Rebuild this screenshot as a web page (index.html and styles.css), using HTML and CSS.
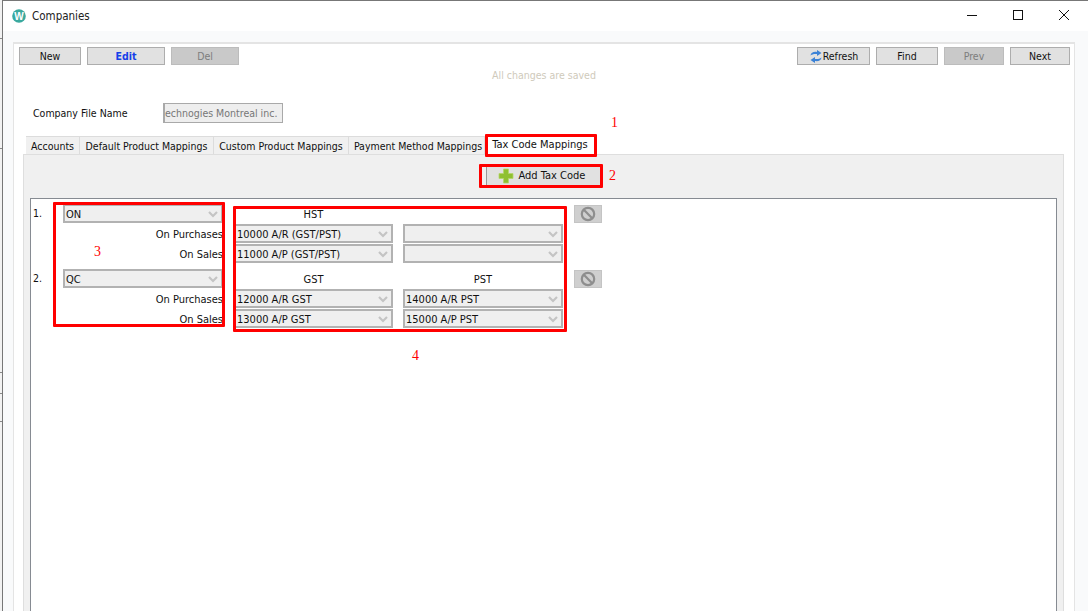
FILE: index.html
```html
<!DOCTYPE html>
<html lang="en">
<head>
<meta charset="utf-8">
<title>Companies</title>
<link rel="stylesheet" href="styles.css">
</head>
<body>
<div class="desktop">
  <i class="tick t1"></i><i class="tick t2"></i><i class="tick t3"></i><i class="tick t4"></i><i class="tick t5"></i>
  <div class="window">
    <header class="titlebar">
      <svg class="app-icon" viewBox="0 0 14 14" width="14" height="14"><circle cx="7" cy="7" r="6.800" fill="#3aa99f"/><text x="7" y="10.500" text-anchor="middle" class="app-w">W</text></svg>
      <span class="title">Companies</span>
      <div class="controls">
        <svg width="46" height="12" viewBox="0 0 46 12"><path d="M18 6.500h10" stroke="#111" fill="none"/></svg>
        <svg width="46" height="12" viewBox="0 0 46 12"><rect x="18.500" y="1.500" width="9" height="9" stroke="#111" fill="none"/></svg>
        <svg width="46" height="12" viewBox="0 0 46 12"><path d="M18 1l10 10M28 1L18 11" stroke="#111" fill="none"/></svg>
      </div>
    </header>
    <main class="client">
      <section class="panel">
        <div class="toolbar">
          <div class="btn-group">
            <button class="btn w62">New</button>
            <button class="btn w78 edit">Edit</button>
            <button class="btn w68 off">Del</button>
          </div>
          <div class="btn-group">
            <button class="btn w73"><svg class="refresh" viewBox="0 0 14 14" width="14" height="15"><path d="M1.500 6C2 3 4.500 1.800 8 2.400V.6l4.500 3L8 6.400V4.600C5.500 4.200 3.500 4.600 1.500 6z" fill="#3b82d6"/><path d="M12.500 8C12 11 9.500 12.200 6 11.600v1.800l-4.500-3L6 7.600v1.800c2.500.4 4.500 0 6.500-1.400z" fill="#3b82d6"/></svg>Refresh</button>
            <button class="btn w62">Find</button>
            <button class="btn w60 off">Prev</button>
            <button class="btn w60">Next</button>
          </div>
        </div>
        <p class="status">All changes are saved</p>
        <div class="file-row">
          <label class="file-label">Company File Name</label>
          <div class="file-input">echnogies Montreal inc.</div>
        </div>
        <nav class="tabs">
          <span class="tab w54">Accounts</span>
          <span class="tab w134">Default Product Mappings</span>
          <span class="tab w135">Custom Product Mappings</span>
          <span class="tab w136">Payment Method Mappings</span>
          <span class="tab active">Tax Code Mappings</span>
        </nav>
        <div class="pane">
          <div class="add-strip">
            <button class="add-btn"><svg viewBox="0 0 16 16" width="16" height="16"><path d="M5.500 1h5v4.500H15v5h-4.500V15h-5v-4.500H1v-5h4.500z" fill="#8fc031" stroke="#b4d56a" stroke-width=".8"/></svg>Add Tax Code</button>
          </div>
          <div class="sheet">
            <div class="tax-grid">
              <span class="num">1.</span>
              <div class="select c2"><span>ON</span><svg class="chev" viewBox="0 0 10 7" width="10" height="7"><path d="M1 1l4 4 4-4"/></svg></div>
              <span class="head c4">HST</span>
              <span class="head c6"></span>
              <div class="ban"><svg viewBox="0 0 16 16" width="16" height="16"><circle cx="8" cy="8" r="6.200"/><path d="M3.800 3.800l8.400 8.400"/></svg></div>

              <span class="lbl">On Purchases</span>
              <div class="select c4"><span>10000 A/R (GST/PST)</span><svg class="chev" viewBox="0 0 10 7" width="10" height="7"><path d="M1 1l4 4 4-4"/></svg></div>
              <div class="select c6"><span></span><svg class="chev" viewBox="0 0 10 7" width="10" height="7"><path d="M1 1l4 4 4-4"/></svg></div>

              <span class="lbl">On Sales</span>
              <div class="select c4"><span>11000 A/P (GST/PST)</span><svg class="chev" viewBox="0 0 10 7" width="10" height="7"><path d="M1 1l4 4 4-4"/></svg></div>
              <div class="select c6"><span></span><svg class="chev" viewBox="0 0 10 7" width="10" height="7"><path d="M1 1l4 4 4-4"/></svg></div>

              <span class="num">2.</span>
              <div class="select c2"><span>QC</span><svg class="chev" viewBox="0 0 10 7" width="10" height="7"><path d="M1 1l4 4 4-4"/></svg></div>
              <span class="head c4">GST</span>
              <span class="head c6">PST</span>
              <div class="ban"><svg viewBox="0 0 16 16" width="16" height="16"><circle cx="8" cy="8" r="6.200"/><path d="M3.800 3.800l8.400 8.400"/></svg></div>

              <span class="lbl">On Purchases</span>
              <div class="select c4"><span>12000 A/R GST</span><svg class="chev" viewBox="0 0 10 7" width="10" height="7"><path d="M1 1l4 4 4-4"/></svg></div>
              <div class="select c6"><span>14000 A/R PST</span><svg class="chev" viewBox="0 0 10 7" width="10" height="7"><path d="M1 1l4 4 4-4"/></svg></div>

              <span class="lbl">On Sales</span>
              <div class="select c4"><span>13000 A/P GST</span><svg class="chev" viewBox="0 0 10 7" width="10" height="7"><path d="M1 1l4 4 4-4"/></svg></div>
              <div class="select c6"><span>15000 A/P PST</span><svg class="chev" viewBox="0 0 10 7" width="10" height="7"><path d="M1 1l4 4 4-4"/></svg></div>
            </div>
          </div>
        </div>
      </section>
    </main>
  </div>
  <div class="mark m1"></div><span class="mark-n n1">1</span>
  <div class="mark m2"></div><span class="mark-n n2">2</span>
  <div class="mark m3"></div><span class="mark-n n3">3</span>
  <div class="mark m4"></div><span class="mark-n n4">4</span>
</div>
</body>
</html>
```
FILE: styles.css
```css
* { box-sizing: border-box; }
html, body { margin: 0; height: 611px; overflow: hidden; background: #fff; }
body { font-family: "DejaVu Sans", "Liberation Sans", sans-serif; font-stretch: condensed; font-size: 10.500px; color: #111; }
.desktop { position: relative; width: 1088px; height: 611px; padding-left: 2px; background: #f2f2f2; }
.tick { position: absolute; left: 0; width: 2px; height: 1px; background: #888; }
.t1 { top: 38px; } .t2 { top: 148px; } .t3 { top: 372px; } .t4 { top: 393px; } .t5 { top: 421px; }
.window { height: 611px; display: flex; flex-direction: column; border-left: 1px solid #777; border-top: 1px solid #777; background: #f9fafb; }
.titlebar { height: 30px; flex: none; background: #fff; display: flex; align-items: center; padding-left: 9px; }
.app-icon { flex: none; }
.app-w { font: bold 10px "Liberation Sans", sans-serif; fill: #fff; }
.title { margin-left: 6px; font-size: 11.500px; color: #222; }
.controls { margin: 0 1px 2px auto; display: flex; }
.controls svg { display: block; }
.client { flex: 1; padding: 11px 13px 0 10px; min-height: 0; }
.panel { height: 100%; background: #fff; border: solid #e4e4e4; border-width: 2px 1px 0 1px; padding: 3px 0 0 0; display: flex; flex-direction: column; }
.toolbar { display: flex; justify-content: space-between; padding: 0 4px 0 5px; }
.btn-group { display: flex; gap: 6px; }
.btn { height: 18px; padding: 0; border: 1px solid #adadad; background: #e1e1e1; font: inherit; color: #111; display: flex; align-items: center; justify-content: center; }
.w62 { width: 62px; } .w78 { width: 78px; } .w68 { width: 68px; } .w73 { width: 73px; } .w60 { width: 60px; }
.edit { color: #1540e8; font-weight: 700; }
.off { background: #c9c9c9; color: #7d7d7d; border-color: #bcbcbc; }
.status { margin: 3px 0 0; height: 15px; line-height: 15px; text-align: center; color: #cfcabb; }
.file-row { display: flex; align-items: center; margin-top: 20px; padding-left: 19px; height: 20px; }
.file-label { width: 130px; color: #111; }
.file-input { width: 120px; height: 20px; line-height: 18px; border: 1px solid #a9a9a9; border-left-width: 2px; background: #eee; color: #777; padding-left: 0; white-space: nowrap; overflow: hidden; }
.tabs { display: flex; margin: 13px 0 0 12px; height: 18px; }
.tab { height: 18px; line-height: 18px; background: #f0f0f0; border: 1px solid #dcdcdc; border-bottom: 0; border-left: 0; text-align: center; white-space: nowrap; }
.w54 { width: 54px; } .w134 { width: 134px; } .w135 { width: 135px; } .w136 { width: 136px; padding-left: 3px; }
.tab.active { width: 110px; background: #fff; margin-top: -2px; height: 20px; border: 0; font-size: 11px; line-height: 21px; }
.pane { flex: 1; min-height: 0; margin: 0 10px 0 9px; border: 1px solid #dedede; border-bottom: 0; padding: 2px 6px 0 6px; background: #f0f0f0; display: flex; flex-direction: column; }
.add-strip { height: 41px; flex: none; display: flex; justify-content: center; align-items: flex-start; padding: 8px 0 0 1px; }
.add-btn { width: 117px; height: 21px; padding: 0 0 0 11px; border: 1px solid #e1e1e1; border-left-color: #999; background: #e1e1e1; font: inherit; font-size: 11px; color: #111; display: flex; align-items: center; gap: 5px; }
.sheet { flex: 1; min-height: 0; background: #fff; border: 1px solid #868b92; border-bottom: 0; padding: 5px 0 0 2px; }
.tax-grid { display: grid; grid-template-columns: 30px 160px 11px 159px 10px 160px 11px 28px; grid-template-rows: 20px 20px 25px 20px 20px 20px; width: 569px; }
.num { grid-column: 1; line-height: 18px; height: 18px; }
.select { height: 19px; border: 2px solid #b2b2b2; background: #efefef; display: flex; align-items: center; justify-content: space-between; padding: 1px 3px 0 1px; white-space: nowrap; font-size: 11px; }
.chev { flex: none; fill: none; stroke: #c4c4c4; stroke-width: 2.200; }
.head { height: 19px; line-height: 21px; text-align: center; font-size: 11px; }
.lbl { grid-column: 1 / 3; height: 19px; line-height: 21px; text-align: right; font-size: 11px; }
.c2 { grid-column: 2; }
.c4 { grid-column: 4; }
.c6 { grid-column: 6; }
.ban { grid-column: 8; width: 28px; height: 18px; margin-top: 1px; background: #cfcfcf; border: 1px solid #c4c4c4; display: flex; align-items: center; justify-content: center; }
.ban svg { fill: none; stroke: #8e8e8e; stroke-width: 2.200; }
.mark { position: absolute; border: 3px solid #f00; border-radius: 1px; pointer-events: none; }
.m1 { left: 485px; top: 134px; width: 112px; height: 23px; }
.m2 { left: 479px; top: 164px; width: 124px; height: 24px; }
.m3 { left: 53px; top: 202px; width: 172px; height: 125px; }
.m4 { left: 233px; top: 206px; width: 334px; height: 126px; }
.mark-n { position: absolute; color: #f00; font: 14px/16px "Liberation Serif", serif; }
.n1 { left: 611px; top: 115px; }
.n2 { left: 609px; top: 168px; }
.n3 { left: 94px; top: 244px; }
.n4 { left: 412px; top: 348px; }
```
